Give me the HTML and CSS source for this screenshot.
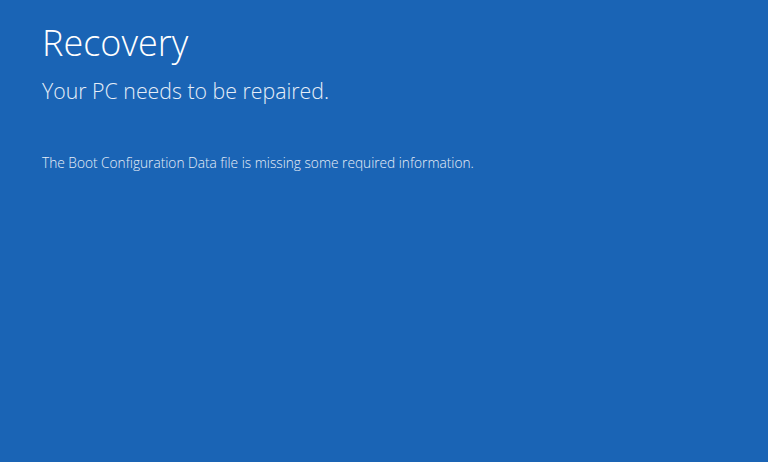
FILE: index.html
```html
<!DOCTYPE html>
<html lang="en">

<head>
    <meta charset="UTF-8">
    <title>Recovery</title>
    <link rel="stylesheet" href="styles.css">
</head>

<body>
    <div class="recovery">
        <h1 class="recovery-title">Recovery</h1>
        <h2 class="recovery-subtitle">Your PC needs to be repaired.</h2>
        <p class="recovery-message">The Boot Configuration Data file is missing some required information.</p>
    </div>
</body>

</html>
```

FILE: styles.css
```css
/* Reset */
* {
    margin: 0;
    padding: 0;
    box-sizing: border-box;
}

body {
    font-family: 'Open Sans', 'Noto Sans', sans-serif;
    font-weight: 300;
    background-color: #1a64b5;
    color: #ffffff;
    width: 768px;
    height: 462px;
    overflow: hidden;
}

.recovery {
    padding: 20px 0 0 42px;
}

.recovery-title {
    font-size: 36px;
    font-weight: 300;
    line-height: 46px;
}

.recovery-subtitle {
    font-size: 21.3px;
    font-weight: 300;
    line-height: 28px;
    margin-top: 11px;
    color: #e6eef8;
}

.recovery-message {
    font-size: 13.7px;
    line-height: 18px;
    margin-top: 49px;
    color: #e6eef8;
}
```
